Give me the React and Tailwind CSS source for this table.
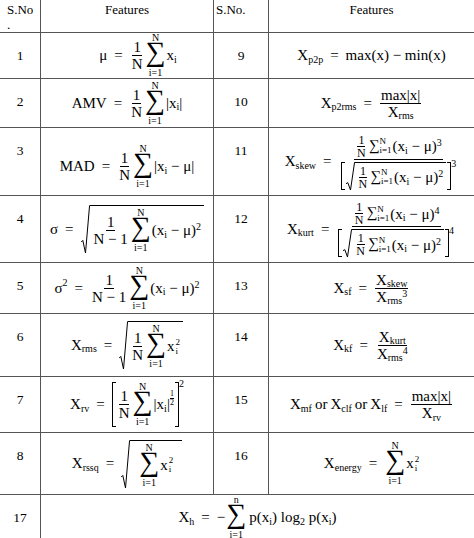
import React from "react";

// small math building blocks, laid out with inline flex
const Sub = ({ children }) => <sub className="text-[10px]">{children}</sub>;
const Sup = ({ children }) => <sup className="text-[10px]">{children}</sup>;

const Eq = () => <span className="mx-[7px]">=</span>;

const Xs = ({ s }) => (
  <span>
    X<Sub>{s}</Sub>
  </span>
);

const xi = (
  <span>
    x<Sub>i</Sub>
  </span>
);

const xi2 = (
  <span className="inline-flex items-center">
    x
    <span className="ml-[1px] inline-flex flex-col text-[9px] leading-[9px]">
      <span>2</span>
      <span>i</span>
    </span>
  </span>
);

function Frac({ num, den, small }) {
  const lh = small ? "leading-[12px] text-[12px]" : "leading-[16px]";
  return (
    <span className="mx-[1px] inline-flex flex-col items-center">
      <span className={`border-b border-black px-[1px] ${lh}`}>{num}</span>
      <span className={`px-[1px] ${lh}`}>{den}</span>
    </span>
  );
}

function BigSum({ top = "N", bottom = "i=1" }) {
  return (
    <span className="mx-[1px] inline-flex flex-col items-center">
      <span className="text-[10px] leading-[10px]">{top}</span>
      <span className="block h-[25px] text-[28px] leading-[18px]">∑</span>
      <span className="text-[10px] leading-[10px]">{bottom}</span>
    </span>
  );
}

function InlineSum() {
  return (
    <span className="mx-[1px] inline-flex items-center">
      <span className="block h-[15px] text-[15px] leading-[12px]">∑</span>
      <span className="inline-flex flex-col text-[9px] leading-[9px]">
        <span>N</span>
        <span>i=1</span>
      </span>
    </span>
  );
}

function Sqrt({ children }) {
  return (
    <span className="inline-flex items-stretch">
      <span className="relative w-[9px]">
        <svg
          className="absolute inset-0 h-full w-full"
          viewBox="0 0 10 40"
          preserveAspectRatio="none"
        >
          <path
            d="M0 31 L2 29.5 L5 40 L9.5 0.5 L10 0.5"
            fill="none"
            stroke="#000"
            strokeWidth="1"
            vectorEffect="non-scaling-stroke"
          />
        </svg>
      </span>
      <span className="inline-flex items-center border-t border-black pt-[2px] pr-[3px] pl-[2px]">
        {children}
      </span>
    </span>
  );
}

function Bracket({ children, power }) {
  return (
    <span className="inline-flex items-stretch">
      <span className="w-[4px] border-y border-l border-black" />
      <span className="inline-flex items-center px-[1px]">{children}</span>
      <span className="w-[4px] border-y border-r border-black" />
      <span className="-mt-[3px] self-start text-[10px] leading-none">
        {power}
      </span>
    </span>
  );
}

const Row = ({ children, className = "" }) => (
  <span className={`inline-flex items-center whitespace-nowrap ${className}`}>
    {children}
  </span>
);

const moment = (p) => (
  <Row>
    <Frac small num="1" den="N" />
    <InlineSum />
    <span>
      (x<Sub>i</Sub> − μ)<Sup>{p}</Sup>
    </span>
  </Row>
);

const standardised = (p) => (
  <Row>
    <Frac
      num={moment(p)}
      den={
        <span className="inline-flex pt-[2px]">
          <Bracket power={p}>
            <Sqrt>{moment(2)}</Sqrt>
          </Bracket>
        </span>
      }
    />
  </Row>
);

const left = [
  {
    n: "1",
    f: (
      <Row className="ml-[22px]">
        μ<Eq />
        <Frac num="1" den="N" />
        <BigSum />
        {xi}
      </Row>
    ),
  },
  {
    n: "2",
    f: (
      <Row>
        AMV<Eq />
        <Frac num="1" den="N" />
        <BigSum />
        <span>|{xi}|</span>
      </Row>
    ),
  },
  {
    n: "3",
    f: (
      <Row className="mt-[10px]">
        MAD<Eq />
        <Frac num="1" den="N" />
        <BigSum />
        <span>
          |x<Sub>i</Sub> − μ|
        </span>
      </Row>
    ),
  },
  {
    n: "4",
    f: (
      <Row>
        σ<Eq />
        <Sqrt>
          <Frac num="1" den="N − 1" />
          <BigSum />
          <span>
            (x<Sub>i</Sub> − μ)<Sup>2</Sup>
          </span>
        </Sqrt>
      </Row>
    ),
  },
  {
    n: "5",
    f: (
      <Row>
        σ<Sup>2</Sup>
        <Eq />
        <Frac num="1" den="N − 1" />
        <BigSum />
        <span>
          (x<Sub>i</Sub> − μ)<Sup>2</Sup>
        </span>
      </Row>
    ),
  },
  {
    n: "6",
    f: (
      <Row>
        <Xs s="rms" />
        <Eq />
        <Sqrt>
          <Frac num="1" den="N" />
          <BigSum />
          {xi2}
        </Sqrt>
      </Row>
    ),
  },
  {
    n: "7",
    f: (
      <Row>
        <Xs s="rv" />
        <Eq />
        <Bracket power="2">
          <Frac num="1" den="N" />
          <BigSum />
          <span>|{xi}|</span>
          <span className="-mt-[12px] inline-flex flex-col items-center text-[8px] leading-[8px]">
            <span className="border-b border-black">1</span>
            <span>2</span>
          </span>
        </Bracket>
      </Row>
    ),
  },
  {
    n: "8",
    f: (
      <Row>
        <Xs s="rssq" />
        <Eq />
        <Sqrt>
          <span className="mx-[6px] inline-flex items-center">
            <BigSum />
            {xi2}
          </span>
        </Sqrt>
      </Row>
    ),
  },
];

const right = [
  {
    n: "9",
    f: (
      <Row>
        <Xs s="p2p" />
        <Eq />
        max(x) − min(x)
      </Row>
    ),
  },
  {
    n: "10",
    f: (
      <Row>
        <Xs s="p2rms" />
        <Eq />
        <Frac num="max|x|" den={<Xs s="rms" />} />
      </Row>
    ),
  },
  {
    n: "11",
    f: (
      <Row>
        <Xs s="skew" />
        <Eq />
        {standardised("3")}
      </Row>
    ),
  },
  {
    n: "12",
    f: (
      <Row>
        <Xs s="kurt" />
        <Eq />
        {standardised("4")}
      </Row>
    ),
  },
  {
    n: "13",
    f: (
      <Row>
        <Xs s="sf" />
        <Eq />
        <Frac
          num={<Xs s="skew" />}
          den={
            <span>
              X<Sub>rms</Sub>
              <Sup>3</Sup>
            </span>
          }
        />
      </Row>
    ),
  },
  {
    n: "14",
    f: (
      <Row>
        <Xs s="kf" />
        <Eq />
        <Frac
          num={<Xs s="kurt" />}
          den={
            <span>
              X<Sub>rms</Sub>
              <Sup>4</Sup>
            </span>
          }
        />
      </Row>
    ),
  },
  {
    n: "15",
    f: (
      <Row>
        <Xs s="mf" />
        <span className="mx-[3px]">or</span>
        <Xs s="clf" />
        <span className="mx-[3px]">or</span>
        <Xs s="lf" />
        <Eq />
        <Frac num="max|x|" den={<Xs s="rv" />} />
      </Row>
    ),
  },
  {
    n: "16",
    f: (
      <Row>
        <Xs s="energy" />
        <Eq />
        <BigSum />
        {xi2}
      </Row>
    ),
  },
];

const heights = ["h-[45px]", "h-[49px]", "h-[68px]", "h-[67px]", "h-[51px]", "h-[63px]", "h-[56px]", "h-[62px]"];

const line = "border-[#555]";

export default function App() {
  return (
    <div className="h-[538px] w-[474px] overflow-hidden bg-white text-black [font-family:'Liberation_Serif',serif]">
      <div className="grid grid-cols-[40px_173px_55px_206px]">
        {/* header */}
        <div className={`h-[32px] pt-[2px] pl-[7px] text-[13px] leading-[15px] ${line}`}>
          S.No
          <br />.
        </div>
        <div className={`border-l pt-[2px] text-center text-[13px] leading-[15px] ${line}`}>
          Features
        </div>
        <div className={`border-l pt-[2px] pl-[2px] text-[13px] leading-[15px] ${line}`}>
          S.No.
        </div>
        <div className={`border-l pt-[2px] text-center text-[13px] leading-[15px] ${line}`}>
          Features
        </div>

        {left.map((l, i) => {
          const r = right[i];
          return (
            <React.Fragment key={l.n}>
              <div className={`${heights[i]} border-t pt-[15px] text-center text-[13.5px] leading-[16px] ${line}`}>
                {l.n}
              </div>
              <div className={`flex items-center justify-center border-t border-l text-[15px] ${line}`}>
                {l.f}
              </div>
              <div className={`border-t border-l pt-[15px] text-center text-[13.5px] leading-[16px] ${line}`}>
                {r.n}
              </div>
              <div className={`flex items-center justify-center border-t border-l text-[15px] ${line}`}>
                {r.f}
              </div>
            </React.Fragment>
          );
        })}

        <div className={`h-[45px] border-t pt-[15px] text-center text-[13.5px] leading-[16px] ${line}`}>
          17
        </div>
        <div className={`col-span-3 flex items-center justify-center border-t border-l pb-[2px] text-[15px] ${line}`}>
          <Row>
            <Xs s="h" />
            <Eq />
            −
            <BigSum top="n" />
            <span className="ml-[2px]">
              p({xi}) log<Sub>2</Sub> p({xi})
            </span>
          </Row>
        </div>
      </div>
    </div>
  );
}
